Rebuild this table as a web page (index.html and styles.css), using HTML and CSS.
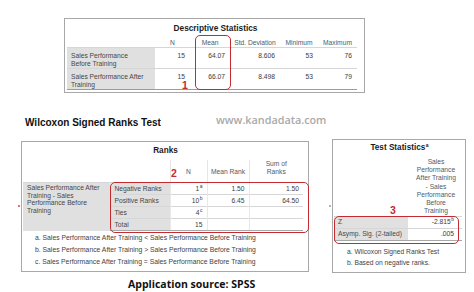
FILE: index.html
```html
<!DOCTYPE html>
<html lang="en">
<head>
<meta charset="utf-8">
<title>Wilcoxon Signed Ranks Test</title>
<link rel="stylesheet" href="styles.css">
</head>
<body>
<div class="page">
  <section class="desc">
    <div class="ttl">Descriptive Statistics</div>
    <table>
      <colgroup>
        <col class="c-lab"><col class="c-n"><col class="c-mean"><col class="c-sd"><col class="c-min"><col class="c-max">
      </colgroup>
      <thead>
        <tr><th></th><th>N</th><th>Mean</th><th>Std. Deviation</th><th>Minimum</th><th>Maximum</th></tr>
      </thead>
      <tbody>
        <tr><td class="lab">Sales Performance<br>Before Training</td><td class="num">15</td><td class="num">64.07</td><td class="num">8.606</td><td class="num">53</td><td class="num">76</td></tr>
        <tr><td class="lab">Sales Performance After<br>Training</td><td class="num">15</td><td class="num">66.07</td><td class="num">8.498</td><td class="num">53</td><td class="num">79</td></tr>
      </tbody>
    </table>
    <div class="hl hl-1"></div>
    <span class="tag tag-1">1</span>
  </section>

  <div class="headline">
    <h2 class="test-title">Wilcoxon Signed Ranks Test</h2>
    <span class="mark">www.kandadata.com</span>
  </div>

  <div class="tables">
    <section class="ranks">
      <div class="ttl">Ranks</div>
      <table>
        <colgroup>
          <col class="r-grp"><col class="r-lab"><col class="r-n"><col class="r-mean"><col class="r-sum">
        </colgroup>
        <thead>
          <tr><th></th><th></th><th>N</th><th>Mean Rank</th><th>Sum of<br>Ranks</th></tr>
        </thead>
        <tbody>
          <tr><td class="lab grp" rowspan="4">Sales Performance After<br>Training - Sales<br>Performance Before<br>Training</td><td class="lab sub">Negative Ranks</td><td class="num">1<sup>a</sup></td><td class="num">1.50</td><td class="num">1.50</td></tr>
          <tr><td class="lab sub">Positive Ranks</td><td class="num">10<sup>b</sup></td><td class="num">6.45</td><td class="num">64.50</td></tr>
          <tr><td class="lab sub">Ties</td><td class="num">4<sup>c</sup></td><td class="num"></td><td class="num"></td></tr>
          <tr><td class="lab sub">Total</td><td class="num">15</td><td class="num"></td><td class="num"></td></tr>
        </tbody>
      </table>
      <ol class="notes notes-r">
        <li>a. Sales Performance After Training &lt; Sales Performance Before Training</li>
        <li>b. Sales Performance After Training &gt; Sales Performance Before Training</li>
        <li>c. Sales Performance After Training = Sales Performance Before Training</li>
      </ol>
      <div class="hl hl-2"></div>
      <span class="tag tag-2">2</span>
      <span class="dot dot-red"></span>
    </section>

    <section class="tstat">
      <div class="ttl">Test Statistics<sup>a</sup></div>
      <table>
        <colgroup><col class="t-lab"><col class="t-val"></colgroup>
        <thead>
          <tr><th></th><th>Sales<br>Performance<br>After Training<br>- Sales<br>Performance<br>Before<br>Training</th></tr>
        </thead>
        <tbody>
          <tr><td class="lab">Z</td><td class="num">-2.815<sup>b</sup></td></tr>
          <tr><td class="lab">Asymp. Sig. (2-tailed)</td><td class="num">.005</td></tr>
        </tbody>
      </table>
      <ol class="notes notes-t">
        <li>a. Wilcoxon Signed Ranks Test</li>
        <li>b. Based on negative ranks.</li>
      </ol>
      <div class="hl hl-3"></div>
      <span class="tag tag-3">3</span>
      <span class="dot dot-grey"></span>
    </section>
  </div>

  <p class="caption">Application source: SPSS</p>
</div>
</body>
</html>
```
FILE: styles.css
```css
* { box-sizing: border-box; }
body { margin: 0; background: #fff; font-family: "Liberation Sans", Arial, sans-serif; }
.page { width: 474px; height: 292px; overflow: hidden; }

table { border-collapse: collapse; table-layout: fixed; font-size: 6.7px; line-height: 8px; color: #3a3a3a; }
th { font-weight: normal; color: #4e5c68; text-align: center; vertical-align: bottom; padding: 0; }
td { padding: 0; }
.lab { background: #e0e0e0; text-align: left; vertical-align: top; color: #474747; padding: 0 4px; }
.num { text-align: right; vertical-align: top; padding: 0 5px 0 0; }
sup { font-size: 5px; line-height: 0; vertical-align: 3px; margin-left: 0.5px; }

.ttl { text-align: center; font-weight: bold; color: #1c1c1c; }

/* Descriptive statistics */
.desc { position: relative; margin: 18px 0 0 64px; width: 301px; height: 75px; border: 1px solid #a8a8a8; padding-left: 2px; }
.desc .ttl { height: 19px; line-height: 19px; font-size: 8.3px; }
.desc table { width: 290px; }
.c-lab { width: 88px; } .c-n { width: 35px; } .c-mean { width: 40px; } .c-sd { width: 50px; } .c-min { width: 38px; } .c-max { width: 39px; }
.desc th { height: 9px; }
.desc td { height: 21px; border-top: 1px solid #d6d6d6; padding-top: 4px; }
.desc tr:last-child td { border-bottom: 1px solid #9c9c9c; }

/* Headline */
.headline { display: flex; align-items: flex-start; margin-top: 24px; height: 12px; padding-left: 25px; }
.test-title { margin: 0; width: 191px; font-size: 10px; line-height: 12px; font-weight: bold; color: #111; }
.mark { margin-top: -3px; font-family: "Open Sans", sans-serif; font-weight: 600; font-size: 10.8px; line-height: 12px; color: #a9a9a9; white-space: nowrap; }

/* Tables row */
.tables { display: flex; align-items: flex-start; margin-top: 11px; padding-left: 21px; }

.ranks { position: relative; margin-top: 1px; width: 288px; height: 131px; border: 1px solid #a8a8a8; padding-left: 1px; }
.ranks .ttl { height: 18px; line-height: 18px; font-size: 8.2px; }
.ranks table { width: 280px; }
.r-grp { width: 87px; } .r-lab { width: 60px; } .r-n { width: 37px; } .r-mean { width: 42px; } .r-sum { width: 54px; }
.ranks th { height: 22px; padding-bottom: 6px; }
.ranks th + th + th { border-left: 1px solid #e6e6e6; }
.ranks td { height: 12px; border-top: 1px solid #d6d6d6; }
.ranks td.num { vertical-align: middle; border-left: 1px solid #e8e8e8; padding-right: 4px; }
.ranks td.sub { vertical-align: middle; padding-left: 4px; border-left: 1px solid #f2f2f2; }
.ranks td.grp { line-height: 7.7px; padding-top: 1px; }
.ranks tr:last-child td { border-bottom: 1px solid #a8a8a8; }

.notes { list-style: none; margin: 0; padding: 0; font-size: 6.7px; color: #3f3f3f; white-space: nowrap; }
.notes-r { padding-left: 12px; padding-top: 1px; line-height: 12px; font-size: 6.8px; }

.tstat { position: relative; margin-top: -1px; margin-left: 23px; width: 134px; height: 134px; border: 1px solid #a8a8a8; padding-left: 1px; }
.tstat .ttl { height: 15px; line-height: 16px; font-size: 8.2px; }
.tstat table { width: 128px; }
.t-lab { width: 74px; } .t-val { width: 54px; }
.tstat th { height: 61px; line-height: 8.2px; padding-left: 2px; }
.tstat td { height: 12px; border-top: 1px solid #d6d6d6; vertical-align: middle; }
.tstat td.num { padding-right: 8px; }
.tstat tr:last-child td { border-bottom: 1px solid #a8a8a8; }
.notes-t { padding-left: 13px; padding-top: 5px; line-height: 11.5px; }

/* Annotations (overlay) */
.hl { position: absolute; border: 1.6px solid #c42b30; border-radius: 5px; }
.hl-1 { left: 130px; top: 16px; width: 36px; height: 55px; }
.hl-2 { left: 88px; top: 40px; width: 199px; height: 51px; }
.hl-3 { left: 1px; top: 76px; width: 125px; height: 28px; }
.tag { position: absolute; font-family: "Liberation Sans", Arial, sans-serif; font-weight: bold; font-size: 10.5px; line-height: 10px; color: #c42b30; }
.tag-1 { left: 117px; top: 61px; }
.tag-2 { left: 149px; top: 26px; }
.tag-3 { left: 57px; top: 65px; }
.dot { position: absolute; width: 2px; height: 2px; border-radius: 1px; }
.dot-red { left: -4px; top: 63px; background: #d0464a; }
.dot-grey { left: -4px; top: 65px; background: #9a9a9a; }

.caption { margin: 4px 0 0 128px; font-family: "Open Sans", sans-serif; font-weight: 700; font-size: 10.5px; line-height: 14px; color: #111; white-space: nowrap; }
```
